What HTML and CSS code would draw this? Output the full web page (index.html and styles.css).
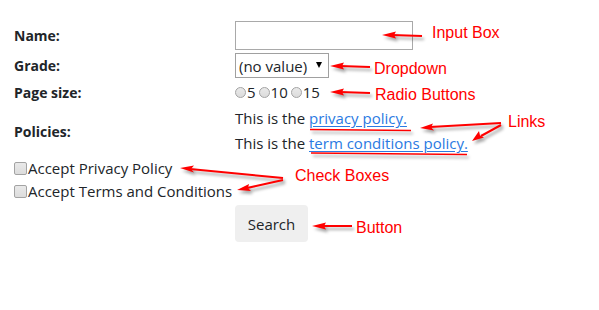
FILE: index.html
```html
<!DOCTYPE html>
<html lang="en">
<head>
    <meta charset="UTF-8">
    <meta name="viewport" content="width=device-width, initial-scale=1.0">
    <title>Search Form</title>
    <link rel="stylesheet" href="styles.css">
</head>
<body>
    <form class="form" onsubmit="return false">
        <label class="label" for="name">Name:</label>
        <div class="field"><input class="text-input" id="name" type="text"></div>

        <label class="label" for="grade">Grade:</label>
        <div class="field">
            <div class="select-box">
                <select class="select" id="grade">
                    <option>(no value)</option>
                    <option>A</option>
                    <option>B</option>
                </select>
            </div>
        </div>

        <div class="label">Page size:</div>
        <div class="field radios">
            <label class="radio"><input type="radio" name="size">5</label>
            <label class="radio"><input type="radio" name="size">10</label>
            <label class="radio"><input type="radio" name="size">15</label>
        </div>

        <div class="label">Policies:</div>
        <div class="field policies">
            <div>This is the <a href="#">privacy policy.</a></div>
            <div>This is the <a href="#">term conditions policy.</a></div>
        </div>

        <label class="check first"><input type="checkbox">Accept Privacy Policy</label>
        <label class="check"><input type="checkbox">Accept Terms and Conditions</label>

        <div></div>
        <div class="field"><button class="btn">Search</button></div>
    </form>

    <!-- annotations drawn over the form -->
    <svg class="marks" width="599" height="310" viewBox="0 0 599 310">
        <g class="arrows">
            <line x1="422" y1="36" x2="392" y2="35"/>
            <polygon points="382,35 396,31.5 394,35 396,38.5"/>

            <line x1="370" y1="67" x2="340" y2="66"/>
            <polygon points="330,66 344,62.5 342,66 344,69.5"/>

            <line x1="370" y1="93" x2="340" y2="92"/>
            <polygon points="330,92 344,88.5 342,92 344,95.5"/>

            <line x1="501" y1="123" x2="430" y2="127"/>
            <polygon points="420,128 433,123.5 431,127.3 434,130.5"/>
            <line x1="501" y1="125" x2="481" y2="136"/>
            <polygon points="472,141 479,131 480,135.5 484,137.5"/>

            <line x1="283" y1="178" x2="190" y2="169"/>
            <polygon points="180,168 194,165.5 191,169 194,172.5"/>
            <line x1="283" y1="180" x2="247" y2="188"/>
            <polygon points="237,190 249,184 248,188 251,191"/>

            <line x1="352" y1="226" x2="322" y2="226"/>
            <polygon points="312,226 326,222.5 324,226 326,229.5"/>

            <line class="under" x1="310" y1="129.5" x2="411" y2="130.5"/>
            <line class="under" x1="311" y1="153" x2="467" y2="154.5"/>
        </g>
        <g class="notes">
            <text x="432" y="38">Input Box</text>
            <text x="374" y="74">Dropdown</text>
            <text x="375" y="100">Radio Buttons</text>
            <text x="508" y="127">Links</text>
            <text x="295" y="181">Check Boxes</text>
            <text x="356" y="233">Button</text>
        </g>
    </svg>
</body>
</html>
```

FILE: styles.css
```css
body {
    margin: 0;
    padding: 21px 0 0 14px;
    font-family: 'Open Sans', sans-serif;
    font-size: 15px;
    color: #212529;
    background-color: #fff;
    position: relative;
    width: 585px;
    height: 289px;
    overflow: hidden;
}

.form {
    display: grid;
    grid-template-columns: 221px auto;
    align-items: center;
    row-gap: 3px;
}

.label {
    font-weight: bold;
    font-size: 14px;
}

.text-input {
    width: 178px;
    height: 29px;
    box-sizing: border-box;
    border: 1px solid #a9a9a9;
    margin: 0;
    padding: 2px 4px;
}

.select-box {
    display: inline-block;
    position: relative;
}

.select {
    width: 94px;
    height: 25px;
    border: 1px solid #a0a0a0;
    background-color: #fff;
    font-family: 'Open Sans', sans-serif;
    font-size: 15px;
    color: #212529;
    padding: 0 0 0 3px;
    margin: 0;
    border-radius: 0;
    -webkit-appearance: none;
    appearance: none;
}

.select-box::after {
    content: "";
    position: absolute;
    left: 81px;
    top: 9px;
    border-left: 3.5px solid transparent;
    border-right: 3.5px solid transparent;
    border-top: 6px solid #000;
    pointer-events: none;
}

.radios {
    display: flex;
    gap: 3px;
    line-height: 22px;
}

.radio,
.check {
    display: flex;
    align-items: center;
}

.radio input,
.check input {
    -webkit-appearance: none;
    appearance: none;
    margin: 0 1px 0 0;
    border: 1px solid #a3a3a3;
    background: linear-gradient(#e9e9e9, #dcdcdc);
}

.radio input {
    border-radius: 50%;
    width: 11px;
    height: 11px;
}

.check input {
    border-radius: 2px;
    width: 13px;
    height: 13px;
}

.policies {
    line-height: 25px;
}

.policies a {
    color: #2a7ae2;
    text-decoration: underline;
    text-underline-offset: 2px;
}

.check {
    grid-column: span 2;
    line-height: 20px;
}

.check.first {
    margin-top: -1px;
}

.btn {
    margin-top: 1px;
    background-color: #efefef;
    border: none;
    border-radius: 4px;
    padding: 0;
    width: 73px;
    height: 37px;
    font-family: 'Open Sans', sans-serif;
    font-size: 15px;
    color: #212529;
    cursor: pointer;
}

.marks {
    position: absolute;
    left: 0;
    top: 0;
    pointer-events: none;
}

.arrows {
    filter: drop-shadow(2px 3px 1.5px rgba(0,0,0,0.35));
}

.arrows line {
    stroke: #f00;
    stroke-width: 2;
}

.arrows polygon {
    fill: #f00;
}

.arrows .under {
    stroke-width: 1.5;
}

.notes text {
    font-family: 'Liberation Sans', Arial, sans-serif;
    font-size: 16px;
    fill: #f00;
}
```
